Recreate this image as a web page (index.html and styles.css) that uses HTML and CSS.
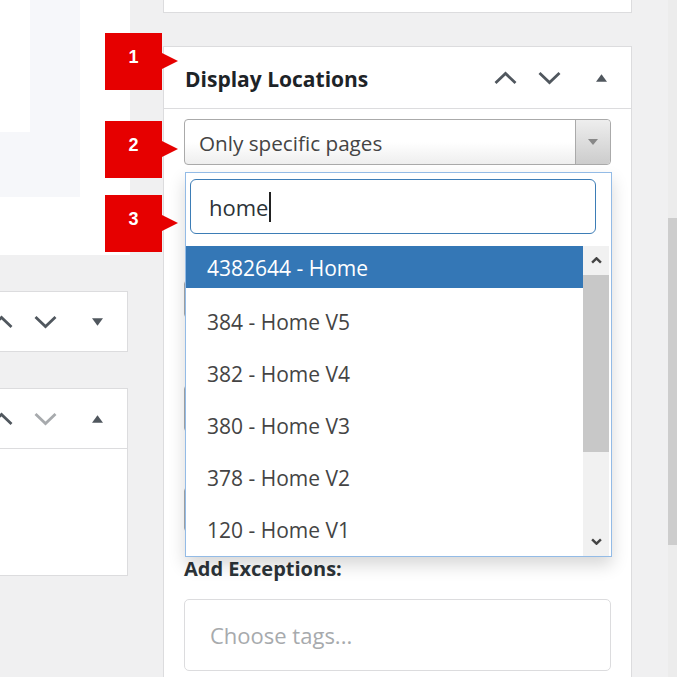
FILE: index.html
```html
<!DOCTYPE html>
<html lang="en">
<head>
<meta charset="utf-8">
<title>Display Locations</title>
<link rel="stylesheet" href="styles.css">
</head>
<body>
<div class="page">
  <div class="left">
    <div class="top-block">
      <div class="shade"><div class="shade-inner"></div></div>
    </div>
    <div class="mini-box mini-one">
      <div class="icons">
        <span class="btn"><svg class="chev" viewBox="0 0 24 14"><path d="M2 12 L12 2.5 L22 12"/></svg></span>
        <span class="btn"><svg class="chev" viewBox="0 0 24 14"><path d="M2 2 L12 11.5 L22 2"/></svg></span>
        <span class="btn wide"><svg class="tri" viewBox="0 0 12 8"><path d="M0 0 H12 L6 8 Z"/></svg></span>
      </div>
    </div>
    <div class="mini-box mini-two">
      <div class="icons icons-head">
        <span class="btn"><svg class="chev" viewBox="0 0 24 14"><path d="M2 12 L12 2.5 L22 12"/></svg></span>
        <span class="btn"><svg class="chev light" viewBox="0 0 24 14"><path d="M2 2 L12 11.5 L22 2"/></svg></span>
        <span class="btn wide"><svg class="tri" viewBox="0 0 12 8"><path d="M0 8 H12 L6 0 Z"/></svg></span>
      </div>
    </div>
  </div>

  <div class="side">
    <div class="top-box"></div>
    <div class="panel">
      <div class="panel-head">
        <h2 class="panel-title">Display Locations</h2>
        <div class="icons">
          <span class="btn"><svg class="chev" viewBox="0 0 24 14"><path d="M2 12 L12 2.5 L22 12"/></svg></span>
          <span class="btn"><svg class="chev" viewBox="0 0 24 14"><path d="M2 2 L12 11.5 L22 2"/></svg></span>
          <span class="btn wide"><svg class="tri" viewBox="0 0 12 8"><path d="M0 8 H12 L6 0 Z"/></svg></span>
        </div>
      </div>
      <div class="panel-body">
        <div class="select">
          <span class="select-text">Only specific pages</span>
          <span class="select-arrow"><svg viewBox="0 0 10 6"><path d="M0 0 H10 L5 6 Z"/></svg></span>
        </div>
        <div class="behind">
          <div class="field f1"></div>
          <div class="field f2"></div>
          <div class="field f3"></div>
        </div>
        <div class="label">Add Exceptions:</div>
        <div class="tags">Choose tags...</div>
      </div>

      <div class="dropdown">
        <div class="search"><span class="search-text">home</span><span class="caret"></span></div>
        <div class="list">
          <div class="options">
            <div class="opt active">4382644 - Home</div>
            <div class="opt-group">
              <div class="opt">384 - Home V5</div>
              <div class="opt">382 - Home V4</div>
              <div class="opt">380 - Home V3</div>
              <div class="opt">378 - Home V2</div>
              <div class="opt">120 - Home V1</div>
            </div>
          </div>
          <div class="lscroll">
            <div class="sarrow"><svg viewBox="0 0 10 6"><path d="M1 5 L5 1 L9 5"/></svg></div>
            <div class="sthumb"></div>
            <div class="sfill"></div>
            <div class="sarrow"><svg viewBox="0 0 10 6"><path d="M1 1 L5 5 L9 1"/></svg></div>
          </div>
        </div>
      </div>
    </div>
  </div>

  <div class="vscroll"><div class="vthumb"></div></div>
</div>

<div class="badge b1">1</div>
<div class="badge b2">2</div>
<div class="badge b3">3</div>
</body>
</html>
```

FILE: styles.css
```css
* { box-sizing: border-box; }
html, body { margin: 0; padding: 0; }
body {
  width: 677px;
  height: 677px;
  overflow: hidden;
  background: #f0f0f1;
  font-family: "Open Sans", "Noto Sans", sans-serif;
  color: #3c434a;
  position: relative;
}
.page {
  display: flex;
  height: 677px;
  overflow: hidden;
}

/* left column */
.left { width: 130px; flex: none; }
.top-block { background: #fff; height: 255px; }
.shade { width: 80px; height: 197px; background: #f6f7fa; }
.shade-inner { width: 30px; height: 132px; background: #fff; }
.mini-box {
  margin-top: 36px;
  width: 128px;
  background: #fff;
  border: 1px solid #dcdcde;
  border-left: none;
}
.mini-one { height: 61px; display: flex; }
.mini-two { height: 188px; }
.icons-head { height: 60px; border-bottom: 1px solid #dcdcde; }

.icons {
  display: flex;
  justify-content: flex-end;
  align-items: center;
  flex: 1;
  min-width: 0;
}
.btn {
  width: 44px;
  flex: none;
  display: flex;
  justify-content: center;
  align-items: center;
}
.btn.wide { width: 60px; }
.chev { width: 25px; height: 14px; fill: none; stroke: #50575e; stroke-width: 2.8; }
.chev.light { stroke: #a7aaad; }
.tri { width: 11px; height: 8px; fill: #50575e; }

/* sidebar */
.side {
  width: 469px;
  margin-left: 33px;
  flex: none;
  display: flex;
  flex-direction: column;
  min-height: 0;
}
.top-box {
  flex: none;
  height: 13px;
  background: #fff;
  border: 1px solid #dcdcde;
  border-top: none;
}
.panel {
  flex: none;
  margin-top: 33px;
  height: 640px;
  background: #fff;
  border: 1px solid #dcdcde;
  border-bottom: none;
  position: relative;
}
.panel-head {
  height: 62px;
  border-bottom: 1px solid #dcdcde;
  display: flex;
  align-items: center;
  padding-left: 21px;
}
.panel-title {
  margin: 0;
  padding-top: 3px;
  font-size: 21px;
  font-weight: 700;
  color: #1d2327;
  white-space: nowrap;
}
.panel-body { padding: 10px 20px 0 20px; }

.select {
  height: 46px;
  display: flex;
  border: 1px solid #aaa;
  border-radius: 4px;
  background: linear-gradient(#fff 50%, #eee);
}
.select-text {
  flex: 1;
  display: flex;
  align-items: center;
  padding-left: 14px;
  padding-top: 2px;
  font-size: 20.7px;
  color: #444;
}
.select-arrow {
  width: 35px;
  border-left: 1px solid #aaa;
  border-radius: 0 4px 4px 0;
  background: linear-gradient(#eee, #ccc);
  display: flex;
  align-items: center;
  justify-content: center;
}
.select-arrow svg { width: 10px; height: 6px; fill: #888; }

.behind {
  height: 392px;
  display: flex;
  flex-direction: column;
}
.field {
  flex: none;
  border: 1px solid #a7aaad;
  border-radius: 4px;
}
.f1 { margin-top: 115px; height: 38px; }
.f2 { margin-top: 67px; height: 47px; }
.f3 { margin-top: 55px; height: 45px; }

.label {
  font-size: 20px;
  line-height: 24px;
  font-weight: 700;
  color: #2c3338;
}
.tags {
  margin-top: 18px;
  height: 72px;
  border: 1px solid #dcdcde;
  border-radius: 5px;
  padding-left: 25px;
  display: flex;
  align-items: center;
  font-size: 22px;
  color: #a7aaad;
}

/* dropdown overlay */
.dropdown {
  position: absolute;
  top: 125px;
  left: 21px;
  width: 427px;
  height: 385px;
  background: #fff;
  border: 1px solid #93bbe6;
  box-shadow: 0 8px 16px rgba(0, 0, 0, 0.16);
  display: flex;
  flex-direction: column;
}
.search {
  flex: none;
  margin: 6px 15px 0 4px;
  height: 55px;
  border: 1.5px solid #3d7db6;
  border-radius: 6px;
  display: flex;
  align-items: center;
  padding-left: 18px;
  font-size: 22px;
  color: #2c3338;
}
.caret {
  width: 1.5px;
  height: 30px;
  background: #222;
  margin-left: 1px;
}
.list {
  flex: none;
  margin-top: 12px;
  height: 310px;
  display: flex;
}
.options { flex: 1; overflow: hidden; }
.opt {
  height: 52px;
  display: flex;
  align-items: center;
  padding-left: 21px;
  font-size: 21px;
  color: #444;
}
.opt.active {
  height: 42px;
  background: #3477b6;
  color: #fff;
  padding-top: 2px;
}
.opt-group { margin-top: 8px; }
.lscroll {
  width: 26px;
  margin-right: 2px;
  background: #f1f1f1;
  display: flex;
  flex-direction: column;
}
.sarrow {
  height: 29px;
  flex: none;
  display: flex;
  align-items: center;
  justify-content: center;
}
.sarrow svg { width: 11px; height: 7px; fill: none; stroke: #444; stroke-width: 2.2; }
.sthumb { flex: none; height: 177px; background: #c8c8c8; }
.sfill { flex: 1; }

/* page scrollbar */
.vscroll {
  margin-left: auto;
  width: 9px;
  background: #ececec;
}
.vthumb {
  margin-top: 218px;
  height: 327px;
  background: #cdcdcd;
}

/* annotation badges */
.badge {
  position: absolute;
  left: 105px;
  width: 57px;
  height: 57px;
  background: #e60000;
  color: #fff;
  font-family: "Liberation Sans", Arial, sans-serif;
  font-size: 18px;
  font-weight: 700;
  line-height: 22px;
  text-align: center;
  padding-top: 13px;
}
.badge::after {
  content: "";
  position: absolute;
  left: 57px;
  top: 20px;
  border-left: 16px solid #e60000;
  border-top: 8px solid transparent;
  border-bottom: 8px solid transparent;
}
.b1 { top: 33px; }
.b2 { top: 121px; }
.b3 { top: 195px; }
```
